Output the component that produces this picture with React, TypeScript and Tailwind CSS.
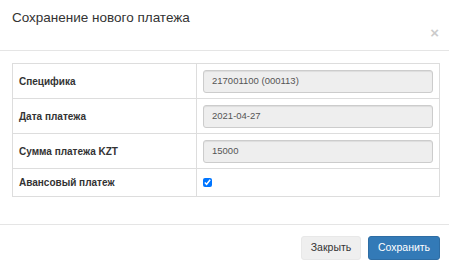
import React from 'react';

const rows = [
  { label: 'Спецификa', value: '217001100 (000113)' },
  { label: 'Дата платежа', value: '2021-04-27' },
  { label: 'Сумма платежа KZT', value: '15000' },
];

function ReadonlyInput({ value }: { value: string }) {
  return (
    <div className="flex h-[23px] items-center rounded-[3px] border border-[#cccccc] bg-[#eeeeee] px-[8px] text-[9.5px] text-[#555555] shadow-[inset_0_1px_1px_rgba(0,0,0,0.075)]">
      {value}
    </div>
  );
}

export default function App() {
  return (
    <div className="h-[267px] w-[449px] bg-white font-['Liberation_Sans',Arial,sans-serif] text-[#333333]">
      {/* header */}
      <div className="flex h-[51px] flex-col border-b border-[#e5e5e5] pl-[12px] pr-[10px] pt-[10px]">
        <h4 className="text-[13.5px] leading-[16px] text-[#333333]">Сохранение нового платежа</h4>
        <div className="flex justify-end">
          <span className="mt-[-1px] text-[15px] font-bold leading-[16px] text-black opacity-20">×</span>
        </div>
      </div>

      {/* body */}
      <div className="pl-[12px] pr-[9px] pt-[12px]">
        <table className="w-full border-collapse border border-[#dddddd]">
          <tbody>
            {rows.map((r) => (
              <tr key={r.label} className="h-[35px]">
                <th className="w-[184px] border border-[#dddddd] px-[6px] text-left text-[10px] font-bold">
                  {r.label}
                </th>
                <td className="border border-[#dddddd] pl-[6px] pr-[6px]">
                  <ReadonlyInput value={r.value} />
                </td>
              </tr>
            ))}
            <tr className="h-[28px]">
              <th className="w-[184px] border border-[#dddddd] px-[6px] text-left text-[10px] font-bold">
                Авансовый платеж
              </th>
              <td className="border border-[#dddddd] pl-[6px]">
                <input type="checkbox" defaultChecked className="m-0 block h-[9px] w-[9px] accent-[#0075ff]" />
              </td>
            </tr>
          </tbody>
        </table>
      </div>

      {/* footer */}
      <div className="mt-[27px] flex justify-end gap-[7px] border-t border-[#e5e5e5] pr-[9px] pt-[11px]">
        <button className="h-[24px] w-[60px] rounded-[3px] border border-[#e8e8e8] bg-[#efefef] text-[10.5px] text-[#333333]">
          Закрыть
        </button>
        <button className="h-[24px] w-[72px] rounded-[3px] border border-[#2e6da4] bg-[#337ab7] text-[10.5px] text-white">
          Сохранить
        </button>
      </div>
    </div>
  );
}
